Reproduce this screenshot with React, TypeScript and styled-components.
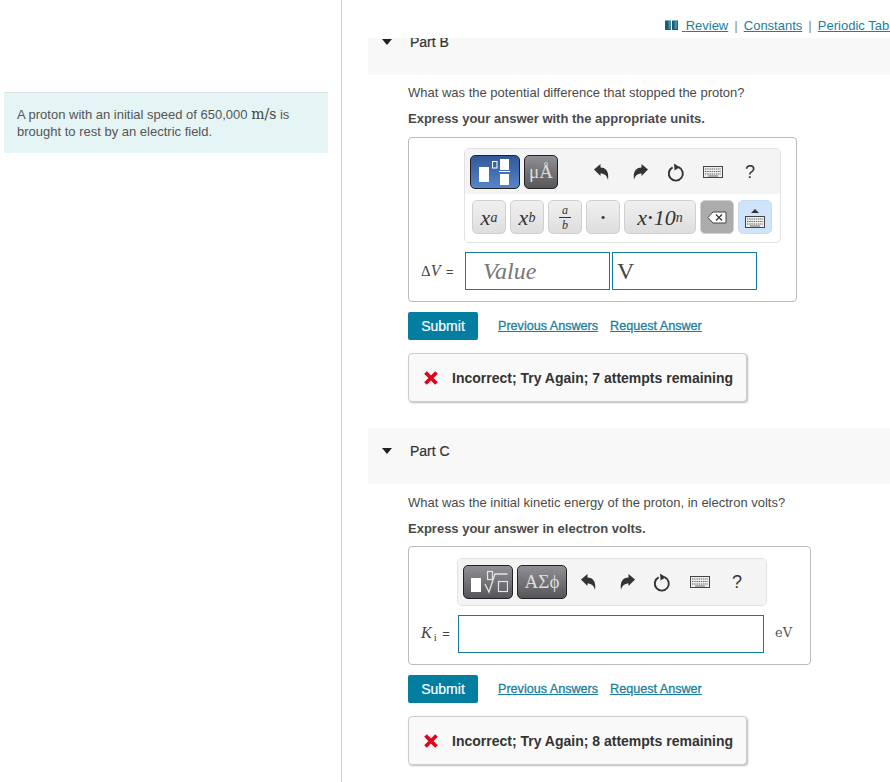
import React from "react";
import styled, { createGlobalStyle } from "styled-components";

const Global = createGlobalStyle`
  html, body { margin: 0; padding: 0; background: #fff; }
  body { font-family: "Liberation Sans", Arial, sans-serif; color: #444; }
`;

const Page = styled.div`
  display: flex;
  width: 890px;
  height: 782px;
  overflow: hidden;
`;
const LeftPane = styled.aside`
  box-sizing: border-box;
  width: 342px;
  flex: none;
  padding: 92px 13px 0 4px;
  border-right: 1px solid #c9d0da;
`;
const Intro = styled.div`
  box-sizing: border-box;
  height: 61px;
  padding: 13px 12px 0 13px;
  background: #e5f4f5;
  border-top: 1px solid #d8e0e2;
  font-size: 13px;
  line-height: 17px;
  color: #555;
  span { font-family: "DejaVu Serif", serif; font-size: 14px; color: #444; }
`;
const RightPane = styled.main`
  flex: 1;
  min-width: 0;
  display: flex;
  flex-direction: column;
`;
const TopBar = styled.nav`
  height: 38px;
  flex: none;
  box-sizing: border-box;
  padding: 12px 0 0 323px;
  display: flex;
  align-items: center;
  white-space: nowrap;
  overflow: hidden;
  font-size: 13.5px;
  color: #888;
  gap: 6px;
  svg { margin-right: -2px; flex: none; }
`;
const TopLink = styled.a`
  color: #1a7f9c;
  text-decoration: underline;
  font-size: 13px;
  flex: none;
`;
const Viewport = styled.div`
  flex: 1;
  overflow: hidden;
  padding-left: 26px;
`;
const Flow = styled.div`
  margin-top: -19px;
`;
const PartHeader = styled.header`
  height: 56px;
  box-sizing: border-box;
  background: #f8f8f8;
  display: flex;
  align-items: flex-start;
  padding: 14px 0 0 14px;
  font-size: 14px;
  line-height: 18px;
  color: #333;
  -webkit-text-stroke: 0.2px #333;
`;
const Caret = styled.i`
  width: 0;
  height: 0;
  margin: 6px 18px 0 0;
  border-left: 5px solid transparent;
  border-right: 5px solid transparent;
  border-top: 6px solid #222;
`;
const PartBody = styled.section<{ $top: number }>`
  padding: ${(p) => p.$top}px 0 26px 40px;
`;
const Question = styled.p`
  margin: 0 0 8px;
  font-size: 13px;
  line-height: 18px;
  color: #4a4a4a;
`;
const Instruction = styled.p<{ $after: number }>`
  margin: 0 0 ${(p) => p.$after}px;
  font-size: 13px;
  line-height: 18px;
  font-weight: 700;
  color: #4a4a4a;
`;
const AnswerBox = styled.div<{ $w: number; $h: number; $top: number }>`
  box-sizing: border-box;
  width: ${(p) => p.$w}px;
  height: ${(p) => p.$h}px;
  padding-top: ${(p) => p.$top}px;
  border: 1px solid #bbb;
  border-radius: 4px;
`;
const Palette = styled.div<{ $w: number; $left: number }>`
  box-sizing: border-box;
  width: ${(p) => p.$w}px;
  margin-left: ${(p) => p.$left}px;
  border: 1px solid #e2e2e2;
  border-radius: 5px;
  overflow: hidden;
  background: #fff;
`;
const PaletteTop = styled.div<{ $h: number }>`
  height: ${(p) => p.$h}px;
  box-sizing: border-box;
  background: #f4f4f4;
  display: flex;
  align-items: flex-start;
  padding: 6px 0 0 5px;
`;
const TemplateBtn = styled.div<{ $blue?: boolean; $w: number }>`
  box-sizing: border-box;
  width: ${(p) => p.$w}px;
  height: 34px;
  margin-right: 4px;
  flex: none;
  border: 1px solid #222;
  border-radius: 5px;
  background: ${(p) =>
    p.$blue
      ? "linear-gradient(#31579a, #5685c8)"
      : "linear-gradient(#8f8f95, #56565a)"};
  color: #ddd;
  font-family: "Liberation Serif", serif;
  font-size: 19px;
  display: flex;
  align-items: center;
  justify-content: center;
`;
const IconGroup = styled.div<{ $offset: number }>`
  display: flex;
  margin-left: ${(p) => p.$offset}px;
`;
const IconSlot = styled.div<{ $w: number }>`
  width: ${(p) => p.$w}px;
  height: 34px;
  flex: none;
  display: flex;
  align-items: center;
  justify-content: center;
  color: #333;
  font-size: 18px;
`;
const KeyRow = styled.div`
  display: flex;
  gap: 4px;
  padding: 6px 0 0 7px;
  height: 48px;
  box-sizing: border-box;
`;
const KeyBtn = styled.div<{ $w?: number; $tone?: "grey" | "blue" }>`
  box-sizing: border-box;
  width: ${(p) => p.$w ?? 34}px;
  height: 34px;
  padding-top: 1px;
  border: 1px solid ${(p) => (p.$tone === "blue" ? "#c7daf0" : "#d0d0d0")};
  border-radius: 5px;
  background: ${(p) =>
    p.$tone === "grey"
      ? "#acacac"
      : p.$tone === "blue"
      ? "#cfe4fb"
      : "linear-gradient(#f0f0f0, #dedede)"};
  display: flex;
  align-items: center;
  justify-content: center;
  font-family: "Liberation Serif", serif;
  font-style: italic;
  font-size: 22px;
  color: #333;
  sup { font-size: 14px; line-height: 0; vertical-align: 9px; }
  sub { font-size: 14px; line-height: 0; vertical-align: -4px; }
`;
const TinyDot = styled.span`
  font-size: 13px;
  font-style: normal;
  margin: 0 1px;
`;
const Fraction = styled.span`
  display: flex;
  flex-direction: column;
  align-items: center;
  font-size: 12px;
  line-height: 12px;
  b { font-weight: 400; display: block; padding: 0 3px 1px; border-bottom: 1px solid #333; }
  em { padding-top: 1px; }
`;
const InputRow = styled.div`
  display: flex;
  align-items: center;
  margin: 9px 0 0 12px;
`;
const MathLabel = styled.span<{ $w: number; $lift?: number }>`
  width: ${(p) => p.$w}px;
  flex: none;
  margin-bottom: ${(p) => p.$lift ?? 0}px;
  font-size: 13px;
  color: #444;
  white-space: nowrap;
  i { font-family: "Liberation Serif", serif; font-size: 16px; margin-right: 2px; }
  sub { font-family: "Liberation Serif", serif; font-size: 11px; line-height: 0; margin-right: 2px; }
  u { font-family: "Liberation Serif", serif; font-size: 15px; text-decoration: none; }
`;
const Field = styled.div<{ $w: number; $ml?: number; $placeholder?: boolean }>`
  box-sizing: border-box;
  width: ${(p) => p.$w}px;
  height: 38px;
  margin-left: ${(p) => p.$ml ?? 0}px;
  border: 1px solid #0f7c9b;
  font-family: "Liberation Serif", serif;
  font-size: 24px;
  font-style: ${(p) => (p.$placeholder ? "italic" : "normal")};
  color: ${(p) => (p.$placeholder ? "#777" : "#444")};
  padding-left: ${(p) => (p.$placeholder ? 17 : 4)}px;
  line-height: 36px;
`;
const Unit = styled.span`
  margin: 0 0 3px 11px;
  font-family: "DejaVu Serif", serif;
  font-size: 13px;
  color: #555;
`;
const ActionRow = styled.div`
  display: flex;
  align-items: center;
  margin-top: 10px;
  height: 28px;
`;
const Submit = styled.button`
  box-sizing: border-box;
  width: 70px;
  height: 28px;
  margin-right: 20px;
  padding: 0;
  border: 0;
  border-radius: 2px;
  background: #037da0;
  color: #fff;
  font: 400 14px "Liberation Sans", Arial, sans-serif;
  -webkit-text-stroke: 0.2px #fff;
`;
const ActionLink = styled.a`
  margin-right: 12px;
  color: #1a7f9c;
  font-size: 12.6px;
  text-decoration: underline;
  -webkit-text-stroke: 0.3px #1a7f9c;
`;
const Feedback = styled.div`
  box-sizing: border-box;
  width: 339px;
  height: 49px;
  margin-top: 13px;
  padding-left: 15px;
  display: flex;
  align-items: center;
  gap: 14px;
  background: #f9f9f9;
  border: 1px solid #ccc;
  border-radius: 4px;
  box-shadow: 1px 1px 2px #bbb;
  font-size: 14px;
  font-weight: 700;
  color: #333;
  white-space: nowrap;
`;

const Undo = () => (
  <svg width="15" height="16" viewBox="0 0 15 16" fill="#333">
    <path d="M0 5.5 L6.5 0 V3.4 C11.8 3.4 15.2 7 14 15.8 C13 11.6 10.4 9.4 6.5 9.4 V12 Z" />
  </svg>
);
const Redo = () => (
  <svg width="15" height="16" viewBox="0 0 15 16" fill="#333">
    <path d="M15 5.5 L8.5 0 V3.4 C3.2 3.4 -0.2 7 1 15.8 C2 11.6 4.6 9.4 8.5 9.4 V12 Z" />
  </svg>
);
const Reset = () => (
  <svg width="18" height="19" viewBox="0 0 18 19" fill="none">
    <path d="M5.6 4.4 A7 7 0 1 0 11.6 4.2" stroke="#333" strokeWidth="1.9" />
    <path d="M7 0.5 L12.8 4.2 L7.6 7.4 Z" fill="#333" />
  </svg>
);
const KeyGlyph = () => (
  <>
    <rect x="0.5" y="0.5" width="19" height="11" fill="#eee" stroke="#444" />
    <path
      d="M2 3h16M2 5.5h16M2 8h16"
      stroke="#666"
      strokeWidth="1.2"
      strokeDasharray="1.4 0.8"
    />
    <path d="M5 10h10" stroke="#666" strokeWidth="1" />
  </>
);
const Keyboard = () => (
  <svg width="20" height="12" viewBox="0 0 20 12">
    <KeyGlyph />
  </svg>
);
const Book = () => (
  <svg width="13" height="10" viewBox="0 0 13 10">
    <path d="M0 0.5 H6 V10 H0 Z M7 0.5 H13 V10 H7 Z" fill="#135f78" />
    <path d="M3.5 1 H6 V9 H3.5 Z M9.5 1 H12 V9 H9.5 Z" fill="#4d8ba0" />
  </svg>
);
const CrossMark = () => (
  <svg width="14" height="14" viewBox="0 0 14 14">
    <path d="M1.5 1.5 L12.5 12.5 M12.5 1.5 L1.5 12.5" stroke="#e2001a" strokeWidth="3.8" />
  </svg>
);
const FractionTemplate = () => (
  <svg width="32" height="26" viewBox="0 0 32 26">
    <rect x="0" y="8" width="10" height="15" fill="#fff" />
    <rect x="13.5" y="2.5" width="4.5" height="6.5" fill="none" stroke="#fff" />
    <rect x="21" y="0" width="9" height="11" fill="#fff" />
    <rect x="20" y="12" width="11" height="1" fill="#fff" />
    <rect x="21" y="15" width="9" height="11" fill="#fff" />
  </svg>
);
const RootTemplate = () => (
  <svg width="40" height="28" viewBox="0 0 40 28">
    <rect x="3" y="10" width="10" height="14" fill="#fff" />
    <rect x="19.5" y="3.5" width="5" height="8" fill="none" stroke="#e4e4e4" strokeWidth="1.2" />
    <path d="M17 16 L21 24 L27 6 H39.5" fill="none" stroke="#e4e4e4" strokeWidth="1.3" />
    <rect x="30.5" y="13.5" width="9" height="10" fill="none" stroke="#e4e4e4" strokeWidth="1.2" />
  </svg>
);
const Backspace = () => (
  <svg width="20" height="13" viewBox="0 0 20 13">
    <path d="M1 6.5 L6 1 H19 V12 H6 Z" fill="#fff" stroke="#444" />
    <path d="M9 3.5 L15 9.5 M15 3.5 L9 9.5" stroke="#333" strokeWidth="1.2" />
  </svg>
);
const KeyboardToggle = () => (
  <svg width="20" height="22" viewBox="0 0 20 22">
    <path d="M6 6 L10 2 L14 6 Z" fill="#333" />
    <g transform="translate(0 9)">
      <KeyGlyph />
    </g>
  </svg>
);

const ToolIcons = ({ offset, widths }: { offset: number; widths: number[] }) => (
  <IconGroup $offset={offset}>
    <IconSlot $w={widths[0]}><Undo /></IconSlot>
    <IconSlot $w={widths[1]}><Redo /></IconSlot>
    <IconSlot $w={widths[2]}><Reset /></IconSlot>
    <IconSlot $w={widths[3]}><Keyboard /></IconSlot>
    <IconSlot $w={widths[4]}>?</IconSlot>
  </IconGroup>
);

const Actions = () => (
  <ActionRow>
    <Submit>Submit</Submit>
    <ActionLink>Previous Answers</ActionLink>
    <ActionLink>Request Answer</ActionLink>
  </ActionRow>
);

export default function App() {
  return (
    <Page>
      <Global />
      <LeftPane>
        <Intro>
          A proton with an initial speed of 650,000 <span>m/s</span> is brought to rest by an electric field.
        </Intro>
      </LeftPane>
      <RightPane>
        <TopBar>
          <Book />
          <TopLink>{"\u00a0"}Review</TopLink>|<TopLink>Constants</TopLink>|<TopLink>Periodic Table</TopLink>
        </TopBar>
        <Viewport>
          <Flow>
            <PartHeader><Caret />Part B</PartHeader>
            <PartBody $top={9}>
              <Question>What was the potential difference that stopped the proton?</Question>
              <Instruction $after={9}>Express your answer with the appropriate units.</Instruction>
              <AnswerBox $w={389} $h={165} $top={10}>
                <Palette $w={317} $left={55}>
                  <PaletteTop $h={45}>
                    <TemplateBtn $blue $w={50}><FractionTemplate /></TemplateBtn>
                    <TemplateBtn $w={34}>μÅ</TemplateBtn>
                    <ToolIcons offset={20} widths={[38, 40, 32, 42, 32]} />
                  </PaletteTop>
                  <KeyRow>
                    <KeyBtn>x<sup>a</sup></KeyBtn>
                    <KeyBtn>x<sub>b</sub></KeyBtn>
                    <KeyBtn><Fraction><b>a</b><em>b</em></Fraction></KeyBtn>
                    <KeyBtn><TinyDot>•</TinyDot></KeyBtn>
                    <KeyBtn $w={72}>x<TinyDot>•</TinyDot>10<sup>n</sup></KeyBtn>
                    <KeyBtn $tone="grey"><Backspace /></KeyBtn>
                    <KeyBtn $tone="blue"><KeyboardToggle /></KeyBtn>
                  </KeyRow>
                </Palette>
                <InputRow>
                  <MathLabel $w={44}><u>Δ</u><i>V</i> =</MathLabel>
                  <Field $w={145} $placeholder>Value</Field>
                  <Field $w={145} $ml={2}>V</Field>
                </InputRow>
              </AnswerBox>
              <Actions />
              <Feedback><CrossMark />Incorrect; Try Again; 7 attempts remaining</Feedback>
            </PartBody>
            <PartHeader><Caret />Part C</PartHeader>
            <PartBody $top={10}>
              <Question>What was the initial kinetic energy of the proton, in electron volts?</Question>
              <Instruction $after={8}>Express your answer in electron volts.</Instruction>
              <AnswerBox $w={403} $h={119} $top={11}>
                <Palette $w={310} $left={48}>
                  <PaletteTop $h={46}>
                    <TemplateBtn $w={50}><RootTemplate /></TemplateBtn>
                    <TemplateBtn $w={50}>ΑΣϕ</TemplateBtn>
                    <ToolIcons offset={0} widths={[34, 44, 26, 50, 24]} />
                  </PaletteTop>
                </Palette>
                <InputRow>
                  <MathLabel $w={37} $lift={3}><i>K</i><sub>i</sub> =</MathLabel>
                  <Field $w={306} />
                  <Unit>eV</Unit>
                </InputRow>
              </AnswerBox>
              <Actions />
              <Feedback><CrossMark />Incorrect; Try Again; 8 attempts remaining</Feedback>
            </PartBody>
          </Flow>
        </Viewport>
      </RightPane>
    </Page>
  );
}
